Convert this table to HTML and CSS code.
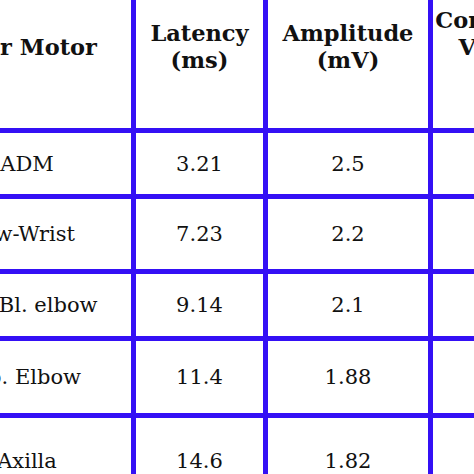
FILE: index.html
```html
<!DOCTYPE html>
<html>
<head>
<meta charset="utf-8">
<link rel="stylesheet" href="styles.css">
</head>
<body>
<div class="table">
  <div class="cell head c1">Ulnar Motor</div>
  <div class="cell head">Latency<br>(ms)</div>
  <div class="cell head">Amplitude<br>(mV)</div>
  <div class="cell head">Conduction<br>Velocity<br>(m/s)</div>

  <div class="cell c1">ADM</div>
  <div class="cell">3.21</div>
  <div class="cell">2.5</div>
  <div class="cell"></div>

  <div class="cell c1">Bw-Wrist</div>
  <div class="cell">7.23</div>
  <div class="cell">2.2</div>
  <div class="cell"></div>

  <div class="cell c1">Ab.-Bl. elbow</div>
  <div class="cell">9.14</div>
  <div class="cell">2.1</div>
  <div class="cell"></div>

  <div class="cell c1">Ab. Elbow</div>
  <div class="cell">11.4</div>
  <div class="cell">1.88</div>
  <div class="cell"></div>

  <div class="cell c1">Axilla</div>
  <div class="cell">14.6</div>
  <div class="cell">1.82</div>
  <div class="cell"></div>
</div>
</body>
</html>
```

FILE: styles.css
```css
html, body {
  margin: 0;
  padding: 0;
  overflow: hidden;
  background: #ffffff;
}

.table {
  display: grid;
  grid-template-columns: 208px 127px 160px 150px;
  grid-template-rows: 162px 61px 70px 62px 72px 86px;
  gap: 5px;
  background: #3410f5;
  margin-left: -77px;
  margin-top: -34px;
  width: max-content;
  font-family: "DejaVu Serif", "Liberation Serif", serif;
  color: #111111;
}

.cell {
  background: #ffffff;
  display: flex;
  align-items: center;
  justify-content: center;
  text-align: center;
  font-size: 21px;
}

.head {
  font-weight: bold;
  font-size: 22.5px;
  line-height: 27px;
}

.head.c1 {
  padding-right: 16px;
}
```
